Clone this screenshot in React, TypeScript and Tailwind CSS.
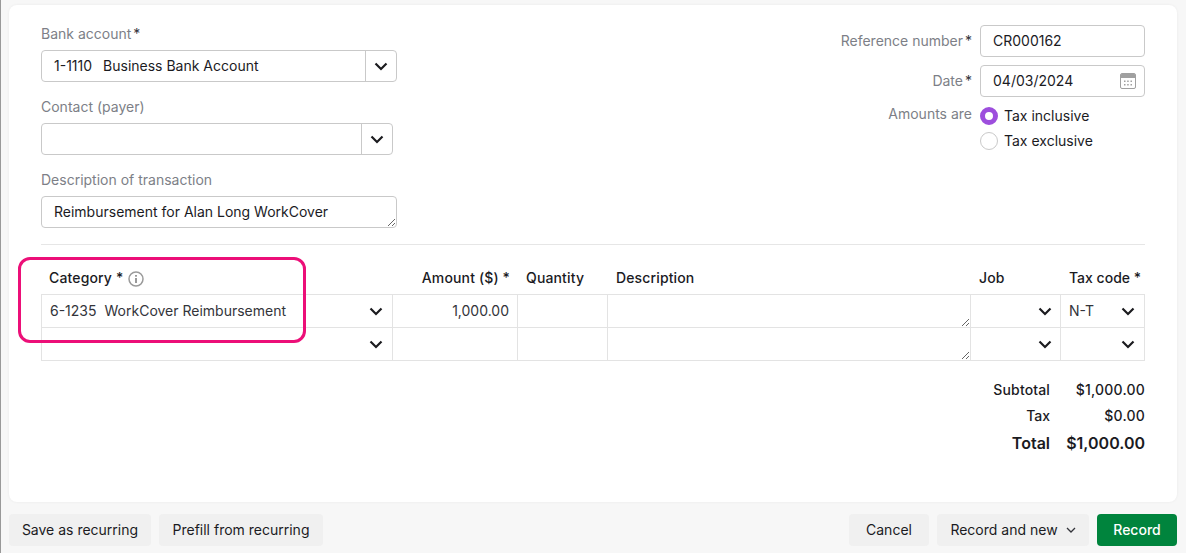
import React from "react";

const Chevron = ({ className = "" }: { className?: string }) => (
  <svg width="14" height="9" viewBox="0 0 14 9" fill="none" className={className}>
    <path d="M1.500 1.500 7 7l5.500-5.500" stroke="#1b1b1f" strokeWidth="2.200" />
  </svg>
);

const SmallChevron = () => (
  <svg width="10" height="6" viewBox="0 0 10 6" fill="none">
    <path d="M1 1l4 4 4-4" stroke="#33343a" strokeWidth="1.300" />
  </svg>
);

const CalendarIcon = () => (
  <svg width="16" height="16" viewBox="0 0 16 16" fill="none">
    <rect x="0.500" y="0.500" width="15" height="15" rx="1.500" fill="#fff" stroke="#a0a0a0" />
    <path d="M1 1.500A.5.5 0 0 1 1.500 1h13a.5.5 0 0 1 .5.5V5H1z" fill="#a0a0a0" />
    <path
      d="M4 7.500h1.500V9H4zM7.200 7.500h1.500V9H7.200zM10.500 7.500H12V9h-1.500zM4 11h1.500v1.500H4zM7.200 11h1.500v1.500H7.200zM10.500 11H12v1.500h-1.500z"
      fill="#a0a0a0"
    />
  </svg>
);

const InfoIcon = () => (
  <svg width="16" height="16" viewBox="0 0 16 16" fill="none">
    <circle cx="8" cy="8" r="7" stroke="#9a9a9a" strokeWidth="1.500" />
    <rect x="7.200" y="7" width="1.600" height="5" fill="#808080" />
    <rect x="7.200" y="4" width="1.600" height="1.700" fill="#808080" />
  </svg>
);

const Label = ({ text, required }: { text: string; required?: boolean }) => (
  <div className="h-5 leading-5 text-[#7d7f87] whitespace-nowrap">
    {text}
    {required && <span className="ml-[2px] text-[#33343a]">*</span>}
  </div>
);

const SelectBox = ({ children, width }: { children?: React.ReactNode; width: string }) => (
  <div className={`mt-1.5 flex h-8 ${width} rounded border border-[#c9c9c9] bg-white`}>
    <div className="flex-1 px-3 leading-[30px] text-[#1b1b1f] whitespace-pre">{children}</div>
    <div className="flex w-[31px] items-center justify-center border-l border-[#c9c9c9]">
      <Chevron />
    </div>
  </div>
);

const rows = [
  { code: "6-1235", name: "WorkCover Reimbursement", amount: "1,000.00", tax: "N-T" },
  { code: "", name: "", amount: "", tax: "" },
];

const App: React.FC = () => {
  return (
    <div
      className="relative flex h-[553px] w-[1186px] flex-col overflow-hidden border-l border-[#999999] bg-[#f7f7f7] pl-2 pr-[9px] pt-[5px] text-sm text-[#1b1b1f]"
      style={{ fontFamily: "Inter, 'Liberation Sans', sans-serif" }}
    >
      <div className="h-[497px] rounded-lg bg-white px-8 pt-[19px] shadow-[0_0_3px_rgba(0,0,0,0.06)]">
        <div className="flex h-[220px] justify-between">
          <div className="w-[356px]">
            <Label text="Bank account" required />
            <SelectBox width="w-[356px]">
              <span className="mr-[11px]">1-1110</span>Business Bank Account
            </SelectBox>
            <div className="mt-[15px]">
              <Label text="Contact (payer)" />
              <SelectBox width="w-[352px]" />
            </div>
            <div className="mt-[15px]">
              <Label text="Description of transaction" />
              <textarea
                readOnly
                value="Reimbursement for Alan Long WorkCover"
                className="mt-1.5 block h-8 w-[356px] rounded border border-[#c9c9c9] px-3 py-[5px] leading-5 text-[#1b1b1f] outline-none"
              />
            </div>
          </div>

          <div className="flex flex-col pt-px">
            <div className="flex items-center justify-end gap-2">
              <Label text="Reference number" required />
              <div className="h-8 w-[165px] rounded border border-[#c9c9c9] px-3 leading-[30px]">CR000162</div>
            </div>
            <div className="mt-2 flex items-center justify-end gap-2">
              <Label text="Date" required />
              <div className="flex h-8 w-[165px] items-center justify-between rounded border border-[#c9c9c9] pl-3 pr-2">
                <span>04/03/2024</span>
                <CalendarIcon />
              </div>
            </div>
            <div className="mt-2.5 flex justify-end gap-2">
              <div className="-mt-[3px]">
                <Label text="Amounts are" />
              </div>
              <div className="flex w-[165px] flex-col gap-[7px]">
                <div className="flex h-[18px] items-center gap-1.5">
                  <span className="h-[18px] w-[18px] rounded-full border-[5px] border-[#9d4edd] bg-white" />
                  <span>Tax inclusive</span>
                </div>
                <div className="flex h-[18px] items-center gap-1.5">
                  <span className="h-[18px] w-[18px] rounded-full border border-[#c9c9c9] bg-white" />
                  <span>Tax exclusive</span>
                </div>
              </div>
            </div>
          </div>
        </div>

        <div className="border-t border-[#e6e6e6]" />

        <div className="grid h-[49px] grid-cols-[351px_125px_90px_363px_91px_84px] items-end pb-[6px] font-medium leading-5 tracking-[0.01em]">
          <div className="flex items-center pl-2">
            Category *
            <span className="ml-[5px] mt-[2px]">
              <InfoIcon />
            </span>
          </div>
          <div className="pr-[7px] text-right">Amount ($) *</div>
          <div className="pl-[9px]">Quantity</div>
          <div className="pl-[9px]">Description</div>
          <div className="pl-[9px]">Job</div>
          <div className="pl-2 whitespace-nowrap tracking-normal">Tax code *</div>
        </div>

        <div className="border-x border-b border-[#e3e3e3]">
          {rows.map((row, i) => (
            <div
              key={i}
              className="grid h-[33px] grid-cols-[350px_125px_90px_363px_90px_84px] border-t border-[#e3e3e3] text-[#33343a]"
            >
              <div className="flex items-center justify-between pl-2 pr-[9px] whitespace-pre">
                <span>
                  <span className="mr-[8px]">{row.code}</span>
                  {row.name}
                </span>
                <Chevron />
              </div>
              <div className="flex items-center justify-end border-l border-[#e3e3e3] pr-2">{row.amount}</div>
              <div className="border-l border-[#e3e3e3]" />
              <div className="border-l border-[#e3e3e3]">
                <textarea readOnly className="block h-[32px] w-full outline-none" />
              </div>
              <div className="flex items-center justify-end border-l border-[#e3e3e3] pr-2">
                <Chevron />
              </div>
              <div className="flex items-center justify-between border-l border-[#e3e3e3] pl-2 pr-[9px]">
                <span>{row.tax}</span>
                <Chevron />
              </div>
            </div>
          ))}
        </div>

        <div className="mt-[16px] flex flex-col items-end">
          <div className="flex h-[26px] items-center font-medium">
            <span className="tracking-[0.01em]">Subtotal</span>
            <span className="w-[95px] text-right tracking-[0.015em]">$1,000.00</span>
          </div>
          <div className="flex h-[26px] items-center font-medium">
            <span>Tax</span>
            <span className="w-[95px] text-right tracking-[0.015em]">$0.00</span>
          </div>
          <div className="flex h-[28px] items-center text-base font-semibold">
            <span>Total</span>
            <span className="w-[95px] text-right">$1,000.00</span>
          </div>
        </div>
      </div>

      <div className="mt-3 flex justify-between">
        <div className="flex gap-2">
          <button className="h-8 w-[142px] rounded bg-[#f0f0f0]">Save as recurring</button>
          <button className="h-8 w-[164px] rounded bg-[#f0f0f0]">Prefill from recurring</button>
        </div>
        <div className="flex gap-2">
          <button className="h-8 w-20 rounded bg-[#f0f0f0]">Cancel</button>
          <button className="flex h-8 w-[152px] items-center justify-center gap-2 rounded bg-[#f0f0f0]">
            Record and new
            <SmallChevron />
          </button>
          <button className="h-8 w-20 rounded bg-[#00843d] font-medium text-white">Record</button>
        </div>
      </div>

      <div className="absolute left-[17px] top-[257px] h-[86px] w-[288px] rounded-xl border-[3px] border-[#ec0f78]" />
    </div>
  );
};

export default App;
